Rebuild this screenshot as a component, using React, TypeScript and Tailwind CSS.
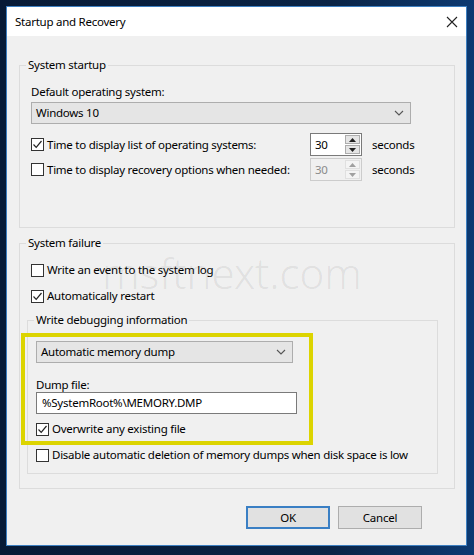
import React from 'react';

const font = { fontFamily: '"Noto Sans", "Open Sans", Arial, sans-serif' };

function CheckBox({ checked }: { checked?: boolean }) {
  return (
    <span className="w-[13px] h-[13px] border border-[#333] bg-white flex items-center justify-center shrink-0">
      {checked && (
        <svg width="11" height="11" viewBox="0 0 11 11">
          <polyline points="1.5,5.5 4.2,8.3 9.5,2" fill="none" stroke="#222" strokeWidth="1.2" />
        </svg>
      )}
    </span>
  );
}

function Chevron() {
  return (
    <svg width="10" height="6" viewBox="0 0 10 6" className="shrink-0">
      <polyline points="1,1 5,5 9,1" fill="none" stroke="#555" strokeWidth="1.1" />
    </svg>
  );
}

function Select({ value, width }: { value: string; width: string }) {
  return (
    <div className={`${width} h-[22px] bg-[#e5e5e5] border border-[#adadad] flex items-center justify-between pl-[4px] pr-[6px]`}>
      <span className="text-[11.5px] leading-[16px] text-black">{value}</span>
      <Chevron />
    </div>
  );
}

function Spin({ disabled }: { disabled?: boolean }) {
  const arrow = disabled ? '#a0a0a0' : '#222';
  return (
    <div className={`w-[52px] h-[23px] border flex ${disabled ? 'border-[#cccccc] bg-[#f0f0f0]' : 'border-[#7a7a7a] bg-white'}`}>
      <div className={`flex-1 flex items-center pl-[4px] text-[11.5px] ${disabled ? 'text-[#8a8a8a]' : 'text-black'}`}>30</div>
      <div className="w-[17px] flex flex-col gap-[1px] p-[1px]">
        <div className={`flex-1 flex items-center justify-center border ${disabled ? 'border-[#e0e0e0] bg-[#f4f4f4]' : 'border-[#adadad] bg-[#e5e5e5]'}`}>
          <svg width="7" height="4" viewBox="0 0 7 4"><polygon points="0,4 3.5,0 7,4" fill={arrow} /></svg>
        </div>
        <div className={`flex-1 flex items-center justify-center border ${disabled ? 'border-[#e0e0e0] bg-[#f4f4f4]' : 'border-[#adadad] bg-[#e5e5e5]'}`}>
          <svg width="7" height="4" viewBox="0 0 7 4"><polygon points="0,0 7,0 3.5,4" fill={arrow} /></svg>
        </div>
      </div>
    </div>
  );
}

function CheckRow({ checked, label, className = '' }: { checked?: boolean; label: string; className?: string }) {
  return (
    <div className={`flex items-center gap-[3px] h-[16px] ${className}`}>
      <CheckBox checked={checked} />
      <span className="text-[11.5px] leading-[16px] text-black whitespace-nowrap">{label}</span>
    </div>
  );
}

function Button({ label, primary }: { label: string; primary?: boolean }) {
  return (
    <button
      type="button"
      className={`w-[84px] h-[23px] bg-[#e1e1e1] text-[11.5px] text-black flex items-center justify-center ${primary ? 'border-2 border-[#3a7fc4]' : 'border border-[#adadad]'}`}
    >
      {label}
    </button>
  );
}

export default function App() {
  return (
    <div className="relative w-[474px] h-[555px] overflow-hidden bg-[linear-gradient(90deg,#071a36_0%,#0a2446_70%,#0d3a72_100%)] pt-[6px] pl-[6px] tracking-[-0.25px]" style={font}>
      <div className="w-[461px] h-[540px] border border-[#3d7fc0] bg-[#f0f0f0] flex flex-col">
        <div className="h-[29px] bg-white flex items-center justify-between pl-[8px] pr-[8px] shrink-0">
          <span className="text-[11.5px] text-black">Startup and Recovery</span>
          <svg width="12" height="12" viewBox="0 0 12 12">
            <path d="M1 1 L11 11 M11 1 L1 11" stroke="#222" strokeWidth="1.1" />
          </svg>
        </div>

        <div className="pl-[12px] pr-[11px] pt-[21px] flex flex-col">
          <fieldset className="border border-[#dcdcdc] p-0 m-0">
            <legend className="ml-[6px] px-[2px] text-[11.5px] leading-[16px] text-black">System startup</legend>
            <div className="pl-[11px] pb-[46px] flex flex-col">
              <div className="mt-[11px] text-[11.5px] leading-[16px] text-black">Default operating system:</div>
              <div className="mt-[2px]">
                <Select value="Windows 10" width="w-[380px]" />
              </div>
              <div className="mt-[9px] flex items-center h-[23px]">
                <div className="w-[279px]">
                  <CheckRow checked label="Time to display list of operating systems:" />
                </div>
                <Spin />
                <span className="ml-[10px] text-[11.5px] text-black">seconds</span>
              </div>
              <div className="mt-[2px] flex items-center h-[23px]">
                <div className="w-[279px]">
                  <CheckRow label="Time to display recovery options when needed:" />
                </div>
                <Spin disabled />
                <span className="ml-[10px] text-[11.5px] text-black">seconds</span>
              </div>
            </div>
          </fieldset>

          <fieldset className="mt-[7px] border border-[#dcdcdc] p-0 m-0">
            <legend className="ml-[6px] px-[2px] text-[11.5px] leading-[16px] text-black">System failure</legend>
            <div className="pl-[7px] pr-[16px] pb-[14px] flex flex-col">
              <CheckRow label="Write an event to the system log" className="mt-[11px] ml-[4px]" />
              <CheckRow checked label="Automatically restart" className="mt-[10px] ml-[4px]" />
              <fieldset className="mt-[8px] border border-[#dcdcdc] p-0 m-0">
                <legend className="ml-[6px] px-[2px] text-[11.5px] leading-[16px] text-black">Write debugging information</legend>
                <div className="pl-[8px] pb-[10px] flex flex-col">
                  <div className="mt-[13px]">
                    <Select value="Automatic memory dump" width="w-[257px]" />
                  </div>
                  <div className="mt-[15px] text-[11.5px] leading-[14px] text-black">Dump file:</div>
                  <div className="w-[261px] h-[22px] border border-[#7a7a7a] bg-white flex items-center pl-[5px] text-[11.5px] text-black">
                    %SystemRoot%\MEMORY.DMP
                  </div>
                  <CheckRow checked label="Overwrite any existing file" className="mt-[7px]" />
                  <CheckRow label="Disable automatic deletion of memory dumps when disk space is low" className="mt-[10px]" />
                </div>
              </fieldset>
            </div>
          </fieldset>

          <div className="mt-[17px] pr-[33px] flex justify-end gap-[8px]">
            <Button label="OK" primary />
            <Button label="Cancel" />
          </div>
        </div>
      </div>

      <div className="pointer-events-none absolute left-[102px] top-[250px] text-[42px] leading-[46px] font-light text-[#000000]/[0.08] tracking-[0px]">
        msftnext.com
      </div>
      <div className="pointer-events-none absolute left-[21px] top-[333px] w-[292px] h-[112px] border-[4px] border-[#dcd400]" />
    </div>
  );
}
